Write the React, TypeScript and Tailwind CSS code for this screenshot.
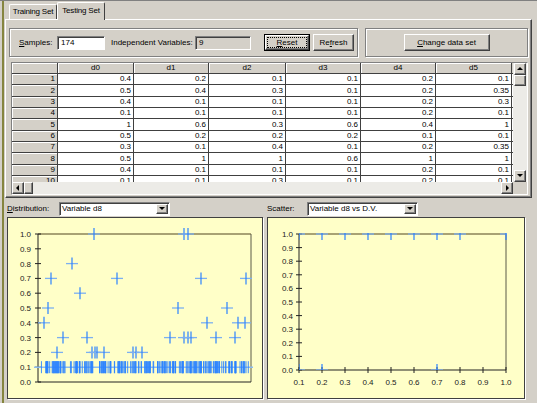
import React from "react";

// data shown in the grid (rows 1..10, columns d0..d5)
const ROWS = [
  ["0.4", "0.2", "0.1", "0.1", "0.2", "0.1"],
  ["0.5", "0.4", "0.3", "0.1", "0.2", "0.35"],
  ["0.4", "0.1", "0.1", "0.1", "0.2", "0.3"],
  ["0.1", "0.1", "0.1", "0.1", "0.2", "0.1"],
  ["1", "0.6", "0.3", "0.6", "0.4", "1"],
  ["0.5", "0.2", "0.2", "0.2", "0.1", "0.1"],
  ["0.3", "0.1", "0.4", "0.1", "0.2", "0.35"],
  ["0.5", "1", "1", "0.6", "1", "1"],
  ["0.4", "0.1", "0.1", "0.1", "0.2", "0.1"],
  ["0.1", "0.1", "0.3", "0.1", "0.2", "0.1"],
];
const COLS = ["d0", "d1", "d2", "d3", "d4", "d5"];
const COL_W = ["w-[76px]", "w-[75px]", "w-[77px]", "w-[75px]", "w-[75px]", "w-[76px]"];

const raised =
  "bg-[#d4d0c8] border border-t-white border-l-white border-r-[#404040] border-b-[#404040] shadow-[inset_-1px_-1px_0_#808080]";
const sunken =
  "border border-t-[#808080] border-l-[#808080] border-r-white border-b-white shadow-[inset_1px_1px_0_#404040]";
const etched = "border border-[#808080] shadow-[1px_1px_0_#fff,inset_1px_1px_0_#fff]";

function Arrow({ dir }: { dir: "up" | "down" | "left" | "right" }) {
  const pts = {
    up: "1,5 4,2 7,5",
    down: "1,2 4,5 7,2",
    left: "5,1 2,4 5,7",
    right: "3,1 6,4 3,7",
  }[dir];
  return (
    <svg width="8" height="8" viewBox="0 0 8 8">
      <polygon points={pts} fill="#000" />
    </svg>
  );
}

function ScrollBtn({ dir }: { dir: "up" | "down" | "left" | "right" }) {
  return (
    <div className={`${raised} w-[12px] h-[12px] flex items-center justify-center shrink-0`}>
      <Arrow dir={dir} />
    </div>
  );
}

function Plus({ x, y, s = 6 }: { x: number; y: number; s?: number }) {
  return (
    <g>
      <line x1={x - s} y1={y} x2={x + s} y2={y} stroke="#7cb0f0" strokeWidth="1.3" />
      <line x1={x} y1={y - s} x2={x} y2={y + s} stroke="#2a82ff" strokeWidth="1.2" />
    </g>
  );
}

const TICKS = [0, 0.1, 0.2, 0.3, 0.4, 0.5, 0.6, 0.7, 0.8, 0.9, 1];

// distribution points, page x -> value
const DIST: [number, number][] = [
  [94, 1], [184, 1], [188, 1],
  [72, 0.8],
  [51, 0.7], [117, 0.7], [201, 0.7], [246, 0.7],
  [80, 0.6],
  [48, 0.5], [178, 0.5], [227, 0.5],
  [44, 0.4], [207, 0.4], [238, 0.4], [245, 0.4],
  [63, 0.3], [87, 0.3], [170, 0.3], [184, 0.3], [188, 0.3], [191, 0.3], [216, 0.3], [235, 0.3],
  [57, 0.2], [92, 0.2], [95, 0.2], [97, 0.2], [104, 0.2], [133, 0.2], [136, 0.2], [142, 0.2],
];

const BAND: number[] = (() => {
  const out: number[] = [];
  let s = 11;
  for (let i = 0; i < 230; i++) {
    s = (s * 9301 + 49297) % 233280;
    const x = 39 + (s / 233280) * 211;
    if ((x > 93 && x < 99) || (x > 115 && x < 117.5) || (x > 176 && x < 178)) continue;
    out.push(x);
  }
  return out;
})();

function DistributionChart() {
  const L = 30, R = 243, T = 16, B = 164;
  const yOf = (v: number) => B - v * (B - T);
  return (
    <svg width="254" height="180" fontFamily="Liberation Sans, Arial, sans-serif">
      <line x1={L} y1={T} x2={R} y2={T} stroke="#a8a274" strokeWidth="2" />
      <line x1={R} y1={T} x2={R} y2={B} stroke="#5a5a48" strokeWidth="1" />
      <line x1={L} y1={T} x2={L} y2={B} stroke="#222" strokeWidth="1" />
      <line x1={L} y1={B} x2={R} y2={B} stroke="#222" strokeWidth="1" />
      {TICKS.map((v) => (
        <g key={v}>
          <line x1={L - 3} y1={yOf(v)} x2={L + 3} y2={yOf(v)} stroke="#222" />
          <text x={L - 7} y={yOf(v) + 3} fontSize="8" fill="#222" textAnchor="end">
            {v.toFixed(1)}
          </text>
        </g>
      ))}
      <line x1={26} y1={yOf(0.1)} x2={245} y2={yOf(0.1)} stroke="#8cbcf0" strokeWidth="1.5" />
      {BAND.map((x, i) => (
        <line key={i} x1={x - 8} y1={yOf(0.1) - 6} x2={x - 8} y2={yOf(0.1) + 6} stroke="#2a82ff" strokeWidth="0.9" />
      ))}
      {DIST.map(([x, v], i) => (
        <Plus key={i} x={x - 8} y={yOf(v)} />
      ))}
    </svg>
  );
}

function ScatterChart() {
  const L = 31, R = 238, T = 16, B = 152;
  const yOf = (v: number) => B - v * (B - T);
  const xOf = (v: number) => L + ((v - 0.1) / 0.9) * (R - L);
  const xs = [0.1, 0.2, 0.3, 0.4, 0.5, 0.6, 0.7, 0.8, 0.9, 1.0];
  const top = [0.1, 0.2, 0.3, 0.4, 0.5, 0.6, 0.7, 0.8, 1.0];
  const bottom = [0.1, 0.2, 0.7];
  return (
    <svg width="256" height="180" fontFamily="Liberation Sans, Arial, sans-serif">
      <defs>
        <clipPath id="plotArea">
          <rect x={L} y={T - 1} width={R - L + 1} height={B - T + 1} />
        </clipPath>
      </defs>
      <line x1={L} y1={T} x2={R} y2={T} stroke="#a8a274" strokeWidth="2" />
      <line x1={R} y1={T} x2={R} y2={B} stroke="#5a5a48" strokeWidth="1" />
      <line x1={L} y1={T} x2={L} y2={B} stroke="#222" strokeWidth="1" />
      <line x1={L} y1={B} x2={R} y2={B} stroke="#222" strokeWidth="1" />
      {TICKS.map((v) => (
        <g key={v}>
          <line x1={L - 3} y1={yOf(v)} x2={L + 3} y2={yOf(v)} stroke="#222" />
          <text x={L - 6} y={yOf(v) + 3} fontSize="8" fill="#222" textAnchor="end">
            {v.toFixed(1)}
          </text>
        </g>
      ))}
      {xs.map((v) => (
        <g key={v}>
          <line x1={xOf(v)} y1={B - 3} x2={xOf(v)} y2={B + 3} stroke="#222" />
          <text x={xOf(v)} y={B + 15} fontSize="8" fill="#222" textAnchor="middle">
            {v.toFixed(1)}
          </text>
        </g>
      ))}
      <g clipPath="url(#plotArea)">
        {top.map((v) => (
          <Plus key={`t${v}`} x={xOf(v)} y={yOf(1)} />
        ))}
        {bottom.map((v) => (
          <Plus key={`b${v}`} x={xOf(v)} y={yOf(0)} />
        ))}
      </g>
    </svg>
  );
}

function Select({ value }: { value: string }) {
  return (
    <div className={`${sunken} bg-white w-[111px] h-[14px] flex items-center justify-between pl-[2px] pr-[1px]`}>
      <span className="leading-none">{value}</span>
      <div className={`${raised} w-[12px] h-[10px] flex items-center justify-center`}>
        <Arrow dir="down" />
      </div>
    </div>
  );
}

export default function App() {
  return (
    <div className="w-[537px] h-[403px] bg-[#d4d0c8] border-t border-[#808080] flex overflow-hidden font-['Liberation_Sans',Arial,sans-serif] text-[8px] text-black">
      <div className="w-[2px] shrink-0" />
      <div className="w-[2px] shrink-0 bg-[#85853f]" />
      <div className="flex flex-col">
        {/* tabs */}
        <div className="flex items-end h-[17px] mt-[1px] pl-[5px]">
          <div className="h-[15px] w-[48px] border-t border-l border-white border-r border-r-[#404040] rounded-t-[2px] flex items-center justify-center tracking-[-0.2px]">
            Training Set
          </div>
          <div className="relative z-10 h-[18px] -mb-[1px] w-[48px] bg-[#d4d0c8] border-t border-l border-white border-r border-r-[#404040] rounded-t-[2px] flex items-center justify-center pb-[1px] tracking-[-0.2px]">
            Testing Set
          </div>
        </div>

        {/* tab page */}
        <div className="ml-[1px] w-[527px] h-[179px] border border-t-white border-l-white border-r-[#404040] border-b-[#404040] shadow-[inset_-1px_-1px_0_#808080] flex flex-col">
          <div className="mt-[8px] ml-[3px] flex gap-[7px] h-[29px]">
            <div className={`${etched} w-[349px] h-full flex items-center pl-[9px]`}>
              <span className="w-[38px]">
                <span className="underline">S</span>amples:
              </span>
              <div className={`${sunken} bg-white w-[48px] h-[14px] flex items-center pl-[3px]`}>174</div>
              <span className="ml-[6px] w-[84px]">Independent Variables:</span>
              <div className={`${sunken} bg-[#d4d0c8] w-[56px] h-[14px] flex items-center pl-[3px]`}>9</div>
              <div className="ml-[13px] w-[46px] h-[17px] border border-black">
                <div className={`${raised} w-full h-full flex items-center justify-center p-[1px]`}>
                  <span className="border border-dotted border-black w-full h-full flex items-center justify-center">
                    <span>
                      <span className="underline">R</span>eset
                    </span>
                  </span>
                </div>
              </div>
              <div className={`${raised} ml-[3px] w-[41px] h-[17px] flex items-center justify-center`}>
                <span>
                  Re<span className="underline">f</span>resh
                </span>
              </div>
            </div>
            <div className={`${etched} w-[163px] h-full flex items-center justify-center`}>
              <div className={`${raised} w-[86px] h-[17px] flex items-center justify-center`}>
                <span>
                  <span className="underline">C</span>hange data set
                </span>
              </div>
            </div>
          </div>

          {/* grid */}
          <div className={`mt-[5px] ml-[5px] w-[517px] h-[133px] ${sunken} flex`}>
            <div className="w-[501px] flex flex-col">
              <div className="h-[119px] overflow-hidden bg-white">
                <div className="flex h-[11px] bg-[#d4d0c8] border-b border-[#404040]">
                  <div className="w-[46px] border-r border-[#404040] shadow-[inset_1px_1px_0_#fff]" />
                  {COLS.map((c, i) => (
                    <div
                      key={c}
                      className={`${COL_W[i]} border-r border-[#404040] shadow-[inset_1px_1px_0_#fff] flex items-center justify-center leading-none`}
                    >
                      {c}
                    </div>
                  ))}
                </div>
                {ROWS.map((row, r) => (
                  <div key={r} className="flex h-[11.35px] border-b border-[#404040]">
                    <div className="w-[46px] bg-[#d4d0c8] border-r border-[#404040] shadow-[inset_1px_1px_0_#fff] flex items-center justify-end pr-[2px] leading-none">
                      {r + 1}
                    </div>
                    {row.map((v, i) => (
                      <div
                        key={i}
                        className={`${COL_W[i]} border-r border-[#404040] flex items-center justify-end pr-[2px] leading-none`}
                      >
                        {v}
                      </div>
                    ))}
                  </div>
                ))}
              </div>
              <div className="h-[12px] flex bg-[#ecebe7]">
                <ScrollBtn dir="left" />
                <div className={`${raised} w-[9px] h-[12px]`} />
                <div className="flex-1" />
                <ScrollBtn dir="right" />
              </div>
            </div>
            <div className="w-[14px] flex flex-col">
              <div className="h-[119px] flex flex-col bg-[#ecebe7] pl-[1px]">
                <ScrollBtn dir="up" />
                <div className={`${raised} w-[12px] h-[11px]`} />
                <div className="flex-1" />
                <ScrollBtn dir="down" />
              </div>
              <div className="h-[12px] bg-[#d4d0c8]" />
            </div>
          </div>
        </div>

        {/* chart selectors */}
        <div className="mt-[4px] ml-[3px] flex h-[14px]">
          <div className="w-[256px] flex items-center">
            <span className="w-[52px]">
              <span className="underline">D</span>istribution:
            </span>
            <Select value="Variable d8" />
          </div>
          <div className="ml-[4px] w-[258px] flex items-center">
            <span className="w-[40px]">Scatter:</span>
            <Select value="Variable d8 vs D.V." />
          </div>
        </div>

        {/* charts */}
        <div className="mt-[1px] ml-[3px] flex gap-[4px] h-[182px]">
          <div className="w-[256px] h-full border border-[#404040] bg-[#ffffc8] shadow-[1px_1px_0_#fff]">
            <DistributionChart />
          </div>
          <div className="w-[258px] h-full border border-[#404040] bg-[#ffffc8] shadow-[1px_1px_0_#fff]">
            <ScatterChart />
          </div>
        </div>
      </div>
    </div>
  );
}
